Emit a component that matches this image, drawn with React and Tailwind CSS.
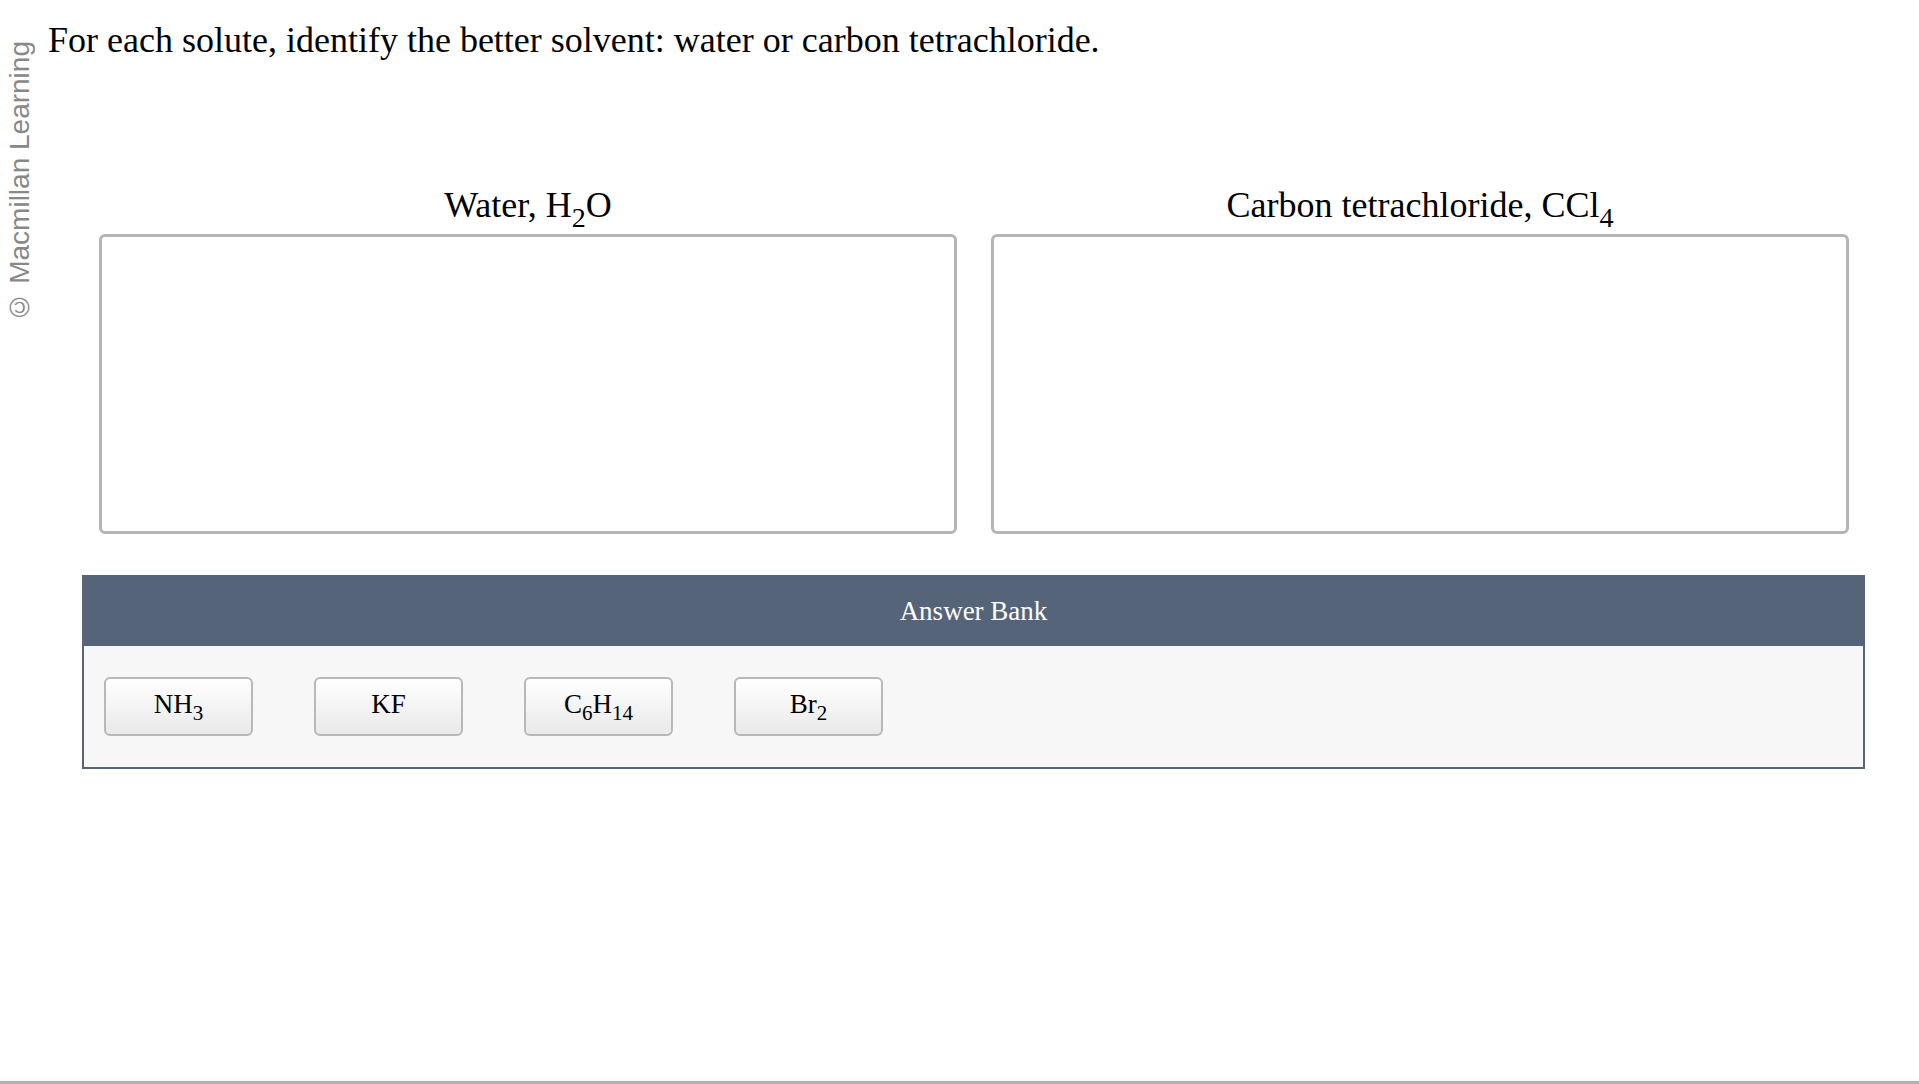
import React from 'react';

const Sub = ({ children }) => (
  <sub className="text-[78%] bottom-[-0.35em]">{children}</sub>
);

const answers = [
  { key: 'nh3', label: <>NH<Sub>3</Sub></> },
  { key: 'kf', label: <>KF</> },
  { key: 'c6h14', label: <>C<Sub>6</Sub>H<Sub>14</Sub></> },
  { key: 'br2', label: <>Br<Sub>2</Sub></> },
];

const bins = [
  { key: 'water', title: <>Water, H<Sub>2</Sub>O</> },
  { key: 'ccl4', title: <>Carbon tetrachloride, CCl<Sub>4</Sub></> },
];

const App = () => {
  return (
    <div className="flex flex-col h-[1084px] w-full bg-white overflow-hidden font-['Liberation_Serif','Times_New_Roman',serif] text-black">
      <div className="flex flex-1">
        {/* watermark */}
        <div className="w-[48px] shrink-0 pl-[6px] pt-[41px]">
          <div className="w-fit h-fit [writing-mode:vertical-rl] rotate-180 font-['Liberation_Sans',Arial,sans-serif] text-[28px] leading-[28px] text-[#888888] whitespace-nowrap">
            © Macmillan Learning
          </div>
        </div>

        <div className="flex-1 flex flex-col">
          <h1 className="mt-[20px] text-[36px] leading-[40px] font-normal">
            For each solute, identify the better solvent: water or carbon tetrachloride.
          </h1>

          {/* drop targets */}
          <div className="mt-[125px] ml-[51px] mr-[70px] grid grid-cols-2 gap-[34px]">
            {bins.map((bin) => (
              <div key={bin.key} className="flex flex-col">
                <div className="text-center text-[36px] leading-[40px] mb-[9px]">{bin.title}</div>
                <div className="h-[300px] border-[3px] border-[#b5b5b5] rounded-[6px] bg-white"></div>
              </div>
            ))}
          </div>

          {/* answer bank */}
          <div className="mt-[41px] ml-[34px] mr-[54px]">
            <div className="h-[71px] bg-[#556478] flex items-center justify-center text-white text-[27px] leading-[30px]">
              Answer Bank
            </div>
            <div className="border-2 border-t-0 border-[#556478] bg-[#f7f7f7] pl-[20px] py-[31px] flex gap-[61px]">
              {answers.map((a) => (
                <div
                  key={a.key}
                  className="w-[149px] h-[59px] border-2 border-[#b8b8b8] rounded-[6px] bg-linear-to-b from-white to-[#e9e9e9] flex items-center justify-center pb-[5px] text-[27px] leading-[30px]"
                >
                  <span>{a.label}</span>
                </div>
              ))}
            </div>
          </div>
        </div>
      </div>
      <div className="h-[3px] bg-[#b2b2b2] shadow-[0_-2px_3px_rgba(0,0,0,0.04)]"></div>
    </div>
  );
};

export default App;
